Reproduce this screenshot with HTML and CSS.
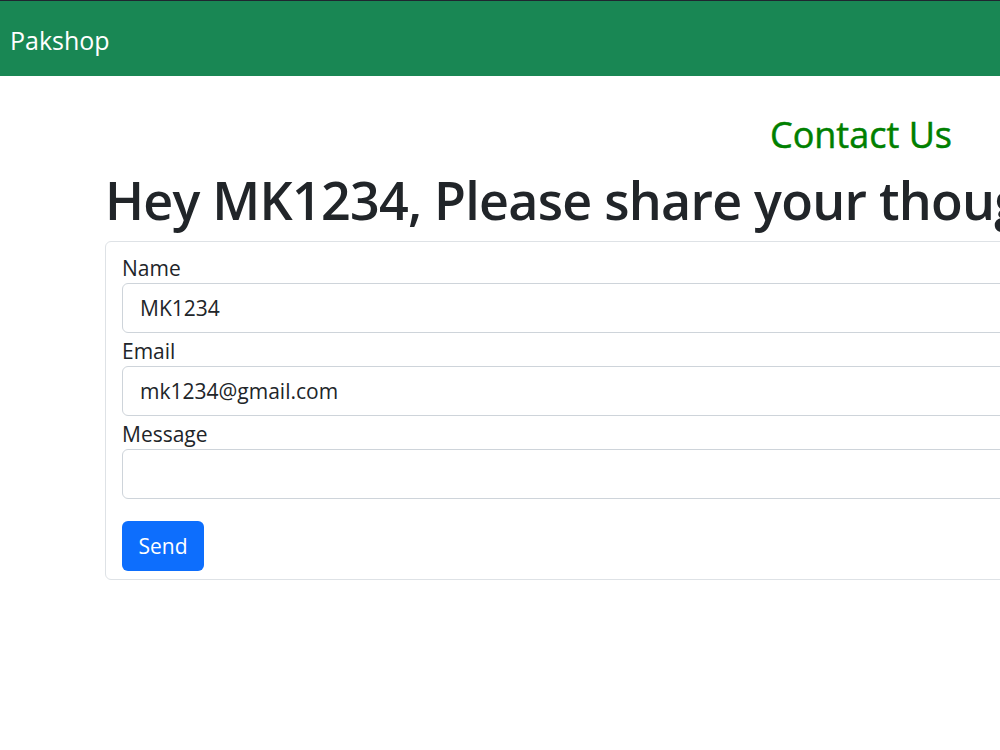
FILE: index.html
```html
<!DOCTYPE html>
<html lang="en">
<head>
<meta charset="utf-8">
<title>Pakshop - Contact Us</title>
<link rel="stylesheet" href="styles.css">
</head>
<body>
<nav class="navbar">
  <a class="brand" href="#">Pakshop</a>
</nav>
<main class="container">
  <h2 class="title">Contact Us</h2>
  <h1 class="greeting">Hey MK1234, Please share your thoughts with us</h1>
  <form class="card">
    <label class="label" for="name">Name</label>
    <input class="control" id="name" type="text" value="MK1234">
    <label class="label" for="email">Email</label>
    <input class="control" id="email" type="email" value="mk1234@gmail.com">
    <label class="label" for="msg">Message</label>
    <textarea class="control area" id="msg" rows="1"></textarea>
    <button class="btn" type="button">Send</button>
  </form>
</main>
</body>
</html>
```
FILE: styles.css
```css
html, body {
  margin: 0;
  padding: 0;
  overflow: hidden;
  background: #fff;
}
body {
  font-family: "Open Sans", "Noto Sans", sans-serif;
  color: #212529;
  width: 1000px;
  height: 750px;
}
.navbar {
  height: 75px;
  background: #198754;
  border-top: 1px solid #1f2630;
  display: flex;
  align-items: center;
  padding-left: 10px;
}
.brand {
  color: #fff;
  text-decoration: none;
  font-size: 25px;
  margin-top: 2px;
}
.container {
  margin-left: 105px;
  width: 1512px;
}
.title {
  margin: 37px 0 0;
  text-align: center;
  color: #008000;
  font-weight: 500;
  font-size: 36px;
  line-height: 1.2;
  -webkit-text-stroke: 0.5px #008000;
}
.greeting {
  margin: 13px 0 9px;
  font-weight: 600;
  font-size: 52px;
  letter-spacing: -0.75px;
  line-height: 1.2;
  white-space: nowrap;
}
.card {
  border: 1px solid #dee2e6;
  border-radius: 6px;
  padding: 11px 16px 8px;
  display: flex;
  flex-direction: column;
  align-items: flex-start;
}
.label {
  font-size: 21px;
  line-height: 30px;
}
.control {
  box-sizing: border-box;
  width: 100%;
  height: 50px;
  border: 1px solid #ced4da;
  border-radius: 6px;
  padding: 0 17px;
  font-family: inherit;
  font-size: 21px;
  color: #212529;
  background: #fff;
  margin: 0 0 3px;
}
.area {
  resize: none;
  padding-top: 10px;
}
.btn {
  margin-top: 19px;
  width: 82px;
  height: 50px;
  border: none;
  border-radius: 6px;
  background: #0d6efd;
  color: #fff;
  font-family: inherit;
  font-size: 21px;
  padding: 0;
}
```
